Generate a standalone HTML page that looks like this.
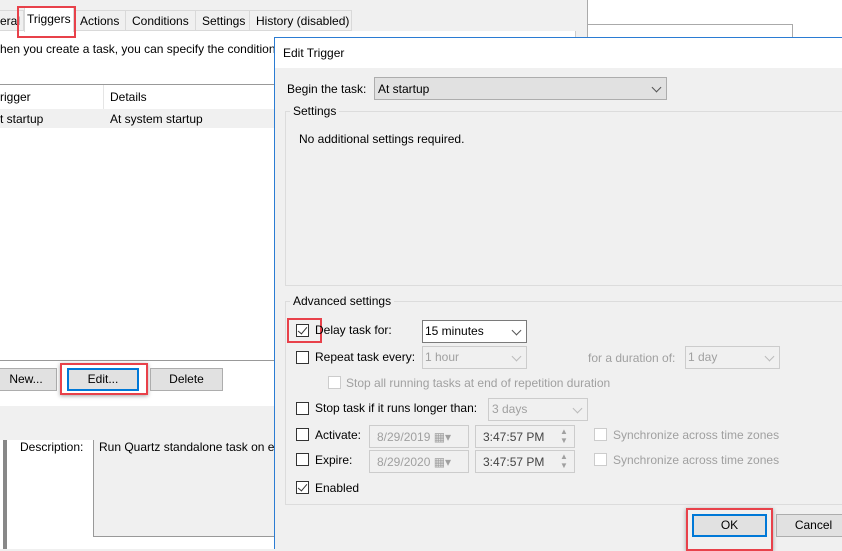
<!DOCTYPE html>
<html><head><style>
*{box-sizing:border-box;margin:0;padding:0}
body{width:842px;height:549px;overflow:hidden;position:relative;background:#f0f0f0;font-family:"Liberation Sans",sans-serif;font-size:12px;color:#000}
.a{position:absolute}
.t{position:absolute;white-space:nowrap;line-height:14px}
.cb{position:absolute;width:13px;height:13px;border:1px solid #333;background:#fff}
.cb.d{border-color:#ccc}
.ck::after{content:"";position:absolute;left:3px;top:0px;width:4px;height:8px;border:solid #333;border-width:0 1.5px 1.5px 0;transform:rotate(40deg)}
.dd{position:absolute;border:1px solid #adadad;background:#e1e1e1;height:23px}
.dd::after{content:"";position:absolute;right:6px;top:6px;width:6px;height:6px;border:solid #555;border-width:0 1px 1px 0;transform:rotate(45deg)}
.dd.dis{background:#f0f0f0;border-color:#ccc}
.dd.dis::after{border-color:#bbb}
.g{color:#a0a0a0}
.btn{position:absolute;background:#e1e1e1;border:1px solid #adadad;text-align:center;line-height:21px;height:23px}
.red{position:absolute;border:2px solid #e8414a;box-shadow:0 1px 4px rgba(0,0,0,.35)}
</style></head><body>
<!-- background window -->
<div class="a" style="left:0;top:31px;width:576px;height:375px;background:#fff;border-right:1px solid #ccc"></div>
<div class="a" style="left:0;top:10px;width:24px;height:21px;border:1px solid #d9d9d9;border-left:0;background:#f0f0f0"></div>
<div class="t" style="left:0;top:14px">eral</div>
<div class="a" style="left:24px;top:7px;width:50px;height:25px;background:#fff;border:1px solid #d9d9d9;border-bottom:0"></div>
<div class="t" style="left:27px;top:12px">Triggers</div>
<div class="a" style="left:74px;top:10px;width:52px;height:21px;border:1px solid #d9d9d9;background:#f0f0f0"></div>
<div class="t" style="left:80px;top:14px">Actions</div>
<div class="a" style="left:125px;top:10px;width:71px;height:21px;border:1px solid #d9d9d9;background:#f0f0f0"></div>
<div class="t" style="left:132px;top:14px">Conditions</div>
<div class="a" style="left:195px;top:10px;width:55px;height:21px;border:1px solid #d9d9d9;background:#f0f0f0"></div>
<div class="t" style="left:202px;top:14px">Settings</div>
<div class="a" style="left:249px;top:10px;width:103px;height:21px;border:1px solid #d9d9d9;background:#f0f0f0"></div>
<div class="t" style="left:256px;top:14px">History (disabled)</div>
<div class="red" style="left:17px;top:6px;width:59px;height:32px;box-shadow:none"></div>
<div class="t" style="left:0;top:42px">hen you create a task, you can specify the conditions</div>
<div class="a" style="left:0;top:84px;width:274px;height:1px;background:#999"></div>
<div class="t" style="left:0;top:90px">rigger</div>
<div class="a" style="left:103px;top:85px;width:1px;height:24px;background:#e5e5e5"></div>
<div class="t" style="left:110px;top:90px">Details</div>
<div class="a" style="left:0;top:109px;width:274px;height:19px;background:#f0f0f0"></div>
<div class="t" style="left:0;top:112px">t startup</div>
<div class="t" style="left:110px;top:112px">At system startup</div>
<div class="a" style="left:0;top:360px;width:274px;height:1px;background:#999"></div>
<div class="btn" style="left:-5px;top:368px;width:62px">New...</div>
<div class="btn" style="left:67px;top:368px;width:72px;border:2px solid #0078d7;line-height:19px">Edit...</div>
<div class="red" style="left:60px;top:363px;width:88px;height:32px"></div>
<div class="btn" style="left:150px;top:368px;width:73px">Delete</div>
<div class="a" style="left:0;top:406px;width:274px;height:34px;background:#f0f0f0"></div>
<div class="a" style="left:0;top:440px;width:274px;height:109px;background:#fff"></div>
<div class="a" style="left:3px;top:440px;width:4px;height:109px;background:#888"></div>
<div class="t" style="left:20px;top:440px">Description:</div>
<div class="a" style="left:93px;top:440px;width:190px;height:97px;background:#f0f0f0;border:1px solid #999;border-top:0"></div>
<div class="t" style="left:99px;top:440px">Run Quartz standalone task on er</div>
<div class="a" style="left:587px;top:0;width:255px;height:37px;background:#fff;border-left:1px solid #aaa"></div>
<div class="a" style="left:587px;top:24px;width:206px;height:14px;border:1px solid #aaa;border-left:0"></div>
<!-- dialog -->
<div class="a" style="left:274px;top:37px;width:568px;height:512px;background:#f0f0f0;border-left:1px solid #2b7cd3;border-top:1px solid #2b7cd3"></div>
<div class="a" style="left:275px;top:38px;width:567px;height:30px;background:#fff"></div>
<div class="t" style="left:283px;top:46px">Edit Trigger</div>
<div class="t" style="left:287px;top:82px">Begin the task:</div>
<div class="dd" style="left:374px;top:77px;width:293px"></div>
<div class="t" style="left:378px;top:82px">At startup</div>
<div class="a" style="left:285px;top:111px;width:560px;height:175px;border:1px solid #dcdcdc"></div>
<div class="t" style="left:290px;top:104px;background:#f0f0f0;padding:0 3px">Settings</div>
<div class="t" style="left:299px;top:132px">No additional settings required.</div>
<div class="a" style="left:285px;top:301px;width:560px;height:204px;border:1px solid #dcdcdc"></div>
<div class="t" style="left:290px;top:294px;background:#f0f0f0;padding:0 3px">Advanced settings</div>
<div class="cb ck" style="left:296px;top:324px"></div>
<div class="red" style="left:287px;top:318px;width:35px;height:25px;box-shadow:none"></div>
<div class="t" style="left:315px;top:323px">Delay task for:</div>
<div class="dd" style="left:422px;top:320px;width:105px;background:#fff;border-color:#7a7a7a"></div>
<div class="t" style="left:425px;top:324px">15 minutes</div>
<div class="cb" style="left:296px;top:351px"></div>
<div class="t" style="left:315px;top:350px">Repeat task every:</div>
<div class="dd dis" style="left:422px;top:346px;width:105px"></div>
<div class="t g" style="left:425px;top:350px">1 hour</div>
<div class="t g" style="left:588px;top:351px">for a duration of:</div>
<div class="dd dis" style="left:685px;top:346px;width:95px"></div>
<div class="t g" style="left:688px;top:350px">1 day</div>
<div class="cb d" style="left:328px;top:376px"></div>
<div class="t g" style="left:346px;top:376px">Stop all running tasks at end of repetition duration</div>
<div class="cb" style="left:296px;top:402px"></div>
<div class="t" style="left:315px;top:401px">Stop task if it runs longer than:</div>
<div class="dd dis" style="left:488px;top:398px;width:100px"></div>
<div class="t g" style="left:492px;top:402px">3 days</div>
<div class="cb" style="left:296px;top:428px"></div>
<div class="t" style="left:315px;top:428px">Activate:</div>
<div class="a" style="left:369px;top:425px;width:100px;height:23px;border:1px solid #ccc"></div>
<div class="t g" style="left:377px;top:430px">8/29/2019 ▦▾</div>
<div class="a" style="left:475px;top:425px;width:100px;height:23px;border:1px solid #ccc"></div>
<div class="t" style="left:483px;top:430px;color:#444">3:47:57 PM</div>
<div class="t g" style="left:560px;top:427px;font-size:8px;line-height:9px">▲<br>▼</div>
<div class="cb d" style="left:594px;top:428px"></div>
<div class="t g" style="left:613px;top:428px">Synchronize across time zones</div>
<div class="cb" style="left:296px;top:453px"></div>
<div class="t" style="left:315px;top:453px">Expire:</div>
<div class="a" style="left:369px;top:450px;width:100px;height:23px;border:1px solid #ccc"></div>
<div class="t g" style="left:377px;top:455px">8/29/2020 ▦▾</div>
<div class="a" style="left:475px;top:450px;width:100px;height:23px;border:1px solid #ccc"></div>
<div class="t" style="left:483px;top:455px;color:#444">3:47:57 PM</div>
<div class="t g" style="left:560px;top:452px;font-size:8px;line-height:9px">▲<br>▼</div>
<div class="cb d" style="left:594px;top:453px"></div>
<div class="t g" style="left:613px;top:453px">Synchronize across time zones</div>
<div class="cb ck" style="left:296px;top:481px"></div>
<div class="t" style="left:315px;top:481px">Enabled</div>
<div class="btn" style="left:692px;top:514px;width:75px;border:2px solid #0078d7;line-height:19px">OK</div>
<div class="red" style="left:686px;top:508px;width:87px;height:43px"></div>
<div class="btn" style="left:776px;top:514px;width:75px">Cancel</div>
</body></html>
